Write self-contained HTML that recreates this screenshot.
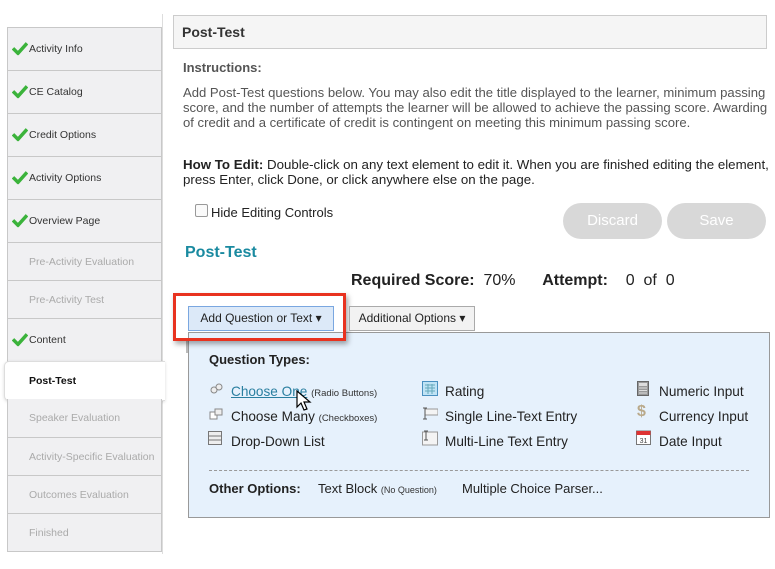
<!DOCTYPE html>
<html><head><style>
body{margin:0;width:775px;height:569px;background:#fff;font-family:"Liberation Sans",Arial,sans-serif;position:relative;overflow:hidden;color:#333}
.a{position:absolute;white-space:nowrap}
.side{position:absolute;left:7px;width:155px;background:#f0f0f2;border:1px solid #c8c8c8;border-top:none;box-sizing:border-box;font-size:10.5px;color:#333}
.side span{position:absolute;left:21px;top:50%;transform:translateY(-50%)}
.side.d{color:#aaa}
.ck{position:absolute;left:4px;top:50%;transform:translateY(-55%)}
.btn{position:absolute;border-radius:18px;background:#d8d8d8;color:#fff;font-size:15px;text-align:center;line-height:36px}
.q{position:absolute;font-size:13.6px;color:#222;white-space:nowrap}
.q small{font-size:9.5px;color:#333}
</style></head><body>
<div class="a" style="left:162px;top:14px;width:1px;height:540px;background:#ddd"></div>
<div class="side" style="top:27px;height:44px;border-top:1px solid #c8c8c8"><svg class="ck" width="16" height="14"><path d="M1 7 L6 12 L15 2" stroke="#3bb33b" stroke-width="3.5" fill="none"/></svg><span>Activity Info</span></div>
<div class="side" style="top:70px;height:44px;border-top:1px solid #c8c8c8"><svg class="ck" width="16" height="14"><path d="M1 7 L6 12 L15 2" stroke="#3bb33b" stroke-width="3.5" fill="none"/></svg><span>CE Catalog</span></div>
<div class="side" style="top:113px;height:44px;border-top:1px solid #c8c8c8"><svg class="ck" width="16" height="14"><path d="M1 7 L6 12 L15 2" stroke="#3bb33b" stroke-width="3.5" fill="none"/></svg><span>Credit Options</span></div>
<div class="side" style="top:156px;height:44px;border-top:1px solid #c8c8c8"><svg class="ck" width="16" height="14"><path d="M1 7 L6 12 L15 2" stroke="#3bb33b" stroke-width="3.5" fill="none"/></svg><span>Activity Options</span></div>
<div class="side" style="top:199px;height:44px;border-top:1px solid #c8c8c8"><svg class="ck" width="16" height="14"><path d="M1 7 L6 12 L15 2" stroke="#3bb33b" stroke-width="3.5" fill="none"/></svg><span>Overview Page</span></div>
<div class="side d" style="top:242px;height:39px;border-top:1px solid #c8c8c8"><span>Pre-Activity Evaluation</span></div>
<div class="side d" style="top:280px;height:39px;border-top:1px solid #c8c8c8"><span>Pre-Activity Test</span></div>
<div class="side" style="top:318px;height:44px;border-top:1px solid #c8c8c8"><svg class="ck" width="16" height="14"><path d="M1 7 L6 12 L15 2" stroke="#3bb33b" stroke-width="3.5" fill="none"/></svg><span>Content</span></div>
<div class="a" style="left:4px;top:361px;width:160px;height:38px;background:#fff;border:1px solid #ddd;border-right:none;border-radius:5px 0 0 5px;box-shadow:0 1px 3px rgba(0,0,0,.15);font-size:10.5px;font-weight:bold;color:#111"><span style="position:absolute;left:24px;top:13px">Post-Test</span></div>
<div class="side d" style="top:399px;height:39px;border-top:none"><span>Speaker Evaluation</span></div>
<div class="side d" style="top:437px;height:39px;border-top:1px solid #c8c8c8"><span>Activity-Specific Evaluation</span></div>
<div class="side d" style="top:475px;height:39px;border-top:1px solid #c8c8c8"><span>Outcomes Evaluation</span></div>
<div class="side d" style="top:513px;height:39px;border-top:1px solid #c8c8c8"><span>Finished</span></div>

<div class="a" style="left:173px;top:15px;width:594px;height:34px;background:#f5f5f5;border:1px solid #ccc;box-sizing:border-box"></div>
<div class="a" style="left:182px;top:24px;font-size:14px;font-weight:bold;color:#333">Post-Test</div>
<div class="a" style="left:183px;top:60px;font-size:13px;font-weight:bold;color:#555">Instructions:</div>
<div class="a" style="left:183px;top:85px;font-size:13.1px;line-height:15px;color:#555">Add Post-Test questions below. You may also edit the title displayed to the learner, minimum passing<br>score, and the number of attempts the learner will be allowed to achieve the passing score. Awarding<br>of credit and a certificate of credit is contingent on meeting this minimum passing score.</div>
<div class="a" style="left:183px;top:157px;font-size:13.3px;line-height:15px;color:#222"><b>How To Edit:</b> Double-click on any text element to edit it. When you are finished editing the element,<br>press Enter, click Done, or click anywhere else on the page.</div>
<div class="a" style="left:195px;top:204px;width:11px;height:11px;border:1px solid #999;border-radius:2px;background:#fafafa"></div>
<div class="a" style="left:211px;top:205px;font-size:13px;color:#222">Hide Editing Controls</div>
<div class="btn" style="left:563px;top:203px;width:99px;height:36px">Discard</div>
<div class="btn" style="left:667px;top:203px;width:99px;height:36px">Save</div>
<div class="a" style="left:185px;top:244px;font-size:16px;font-weight:bold;color:#1a8aa0">Post-Test</div>
<div class="a" style="left:351px;top:272px;font-size:16px;color:#222"><b>Required Score:</b>&nbsp; 70% &nbsp;&nbsp;&nbsp;&nbsp; <b>Attempt:</b> &nbsp;&nbsp; 0 &nbsp;of&nbsp; 0</div>

<div class="a" style="left:186px;top:341px;width:2px;height:12px;background:#bbb"></div>
<div class="a" style="left:188px;top:332px;width:582px;height:186px;background:#e6f1fc;border:1px solid #999;box-sizing:border-box"></div>
<div class="a" style="left:173px;top:293px;width:173px;height:48px;border:3px solid #e8321f;box-sizing:border-box;box-shadow:2px 3px 5px rgba(0,0,0,.35)"></div>
<div class="a" style="left:188px;top:306px;width:146px;height:25px;background:#dce9f8;border:1px solid #7aa7e0;box-sizing:border-box;font-size:12px;line-height:23px;text-align:center;color:#222">Add Question or Text ▾</div>
<div class="a" style="left:349px;top:306px;width:126px;height:25px;background:#f2f2f2;border:1px solid #aaa;box-sizing:border-box;font-size:12px;line-height:23px;text-align:center;color:#222">Additional Options ▾</div>
<div class="a" style="left:209px;top:352px;font-size:13px;font-weight:bold;color:#222">Question Types:</div>

<svg class="a" style="left:210px;top:383px" width="14" height="12"><circle cx="4" cy="7" r="3" fill="#eee" stroke="#888"/><circle cx="9" cy="4" r="3" fill="#eee" stroke="#888"/></svg>
<div class="q" style="left:231px;top:384px"><span style="color:#2a7fa0;text-decoration:underline">Choose One</span> <small>(Radio Buttons)</small></div>
<svg class="a" style="left:209px;top:408px" width="14" height="12"><rect x="1" y="4" width="7" height="7" fill="#fff" stroke="#888"/><rect x="6" y="1" width="7" height="6" fill="#eee" stroke="#888"/></svg>
<div class="q" style="left:231px;top:409px">Choose Many <small>(Checkboxes)</small></div>
<svg class="a" style="left:208px;top:431px" width="14" height="14"><rect x="0.5" y="0.5" width="13" height="13" fill="#eee" stroke="#777"/><line x1="1" y1="5" x2="13" y2="5" stroke="#777"/><line x1="1" y1="9" x2="13" y2="9" stroke="#777"/></svg>
<div class="q" style="left:231px;top:434px">Drop-Down List</div>
<svg class="a" style="left:296px;top:390px" width="16" height="22"><path d="M1 1 L1 17 L5 13 L8 20 L11 19 L8 12 L14 12 Z" fill="#fff" stroke="#000" stroke-width="1.2"/></svg>

<svg class="a" style="left:422px;top:381px" width="16" height="15"><rect x="0.5" y="0.5" width="15" height="14" fill="#bfe3f5" stroke="#4a90c0"/><path d="M3 4H13M3 7H13M3 10H13M6 3V13M10 3V13" stroke="#6ab" stroke-width="1"/></svg>
<div class="q" style="left:445px;top:384px">Rating</div>
<svg class="a" style="left:422px;top:407px" width="16" height="14"><rect x="3" y="2" width="13" height="6" fill="#f4f4f4" stroke="#999"/><path d="M1 1H5M3 1V12M1 12H5" stroke="#555"/></svg>
<div class="q" style="left:445px;top:409px">Single Line-Text Entry</div>
<svg class="a" style="left:422px;top:430px" width="16" height="16"><rect x="0.5" y="2" width="15" height="13" fill="#f4f4f4" stroke="#999"/><path d="M2 1H6M4 1V10M2 10H6" stroke="#555"/></svg>
<div class="q" style="left:445px;top:434px">Multi-Line Text Entry</div>

<svg class="a" style="left:637px;top:381px" width="12" height="15"><rect x="0.5" y="0.5" width="11" height="14" fill="#999" stroke="#666"/><rect x="2" y="2" width="8" height="3" fill="#ddd"/><path d="M2 7H10M2 9.5H10M2 12H10" stroke="#ddd"/></svg>
<div class="q" style="left:659px;top:384px">Numeric Input</div>
<div class="a" style="left:637px;top:403px;font-size:16px;font-weight:bold;color:#b9a98a">$</div>
<div class="q" style="left:659px;top:409px">Currency Input</div>
<svg class="a" style="left:636px;top:430px" width="15" height="15"><rect x="0.5" y="1" width="14" height="13.5" fill="#fff" stroke="#777"/><rect x="0.5" y="1" width="14" height="4" fill="#d33"/><text x="7.5" y="13" font-size="7" text-anchor="middle" font-family="Liberation Sans" fill="#444">31</text></svg>
<div class="q" style="left:659px;top:434px">Date Input</div>

<div class="a" style="left:209px;top:470px;width:540px;border-top:1px dashed #999"></div>
<div class="a" style="left:209px;top:481px;font-size:13px;font-weight:bold;color:#222">Other Options:</div>
<div class="q" style="left:318px;top:481px;font-size:13px">Text Block <small style="font-size:9px">(No Question)</small></div>
<div class="q" style="left:462px;top:481px;font-size:13px">Multiple Choice Parser...</div>
</body></html>
